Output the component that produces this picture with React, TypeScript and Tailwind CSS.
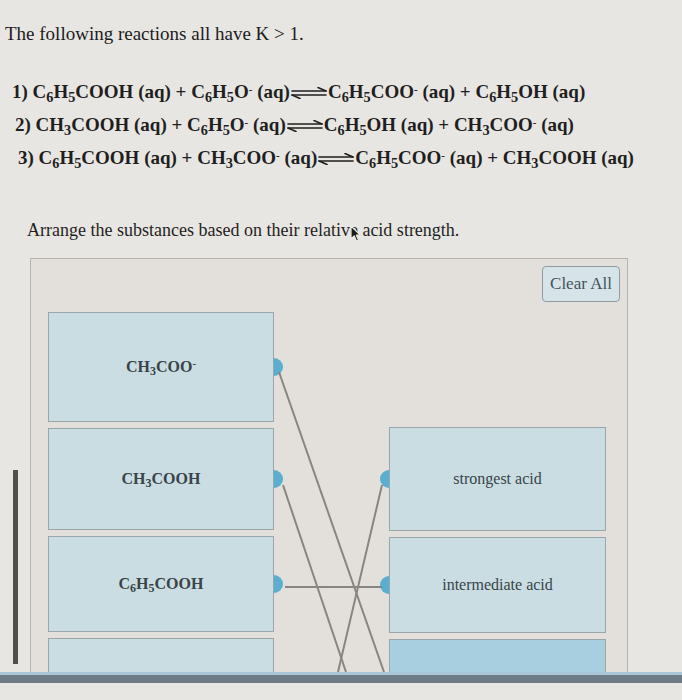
import React from 'react';

// Equilibrium harpoons drawn between reactants and products
function Equilibrium() {
    return (
        <svg width="36" height="12" viewBox="0 0 36 12" className="inline-block align-middle mx-[1px]">
            <g stroke="#1f1f1f" strokeWidth="1.6" fill="none" strokeLinecap="round">
                <line x1="1" y1="4" x2="35" y2="4" />
                <line x1="35" y1="4" x2="27" y2="0.5" />
                <line x1="1" y1="8" x2="35" y2="8" />
                <line x1="1" y1="8" x2="9" y2="11.5" />
            </g>
        </svg>
    );
}

const Ph = () => <>C<sub>6</sub>H<sub>5</sub></>;
const Me = () => <>CH<sub>3</sub></>;
const Minus = () => <sup className="text-[11px]">-</sup>;

const reactions = [
    {
        pad: 'pl-[12px]',
        left: <>1) <Ph />COOH (aq) + <Ph />O<Minus /> (aq)</>,
        right: <><Ph />COO<Minus /> (aq) + <Ph />OH (aq)</>,
    },
    {
        pad: 'pl-[15px]',
        left: <>2) <Me />COOH (aq) + <Ph />O<Minus /> (aq)</>,
        right: <><Ph />OH (aq) + <Me />COO<Minus /> (aq)</>,
    },
    {
        pad: 'pl-[18px]',
        left: <>3) <Ph />COOH (aq) + <Me />COO<Minus /> (aq)</>,
        right: <><Ph />COO<Minus /> (aq) + <Me />COOH (aq)</>,
    },
];

function Dot({ side }: { side: 'left' | 'right' }) {
    return side === 'right' ? (
        <div className="absolute top-1/2 -translate-y-1/2 right-[-10px] w-[9px] h-[18px] rounded-r-full bg-[#5aaed0]" />
    ) : (
        <div className="absolute top-1/2 -translate-y-1/2 left-[-10px] w-[9px] h-[18px] rounded-l-full bg-[#5aaed0]" />
    );
}

function Card({ h, children, dot, bold, tone = 'bg-[#c9dde3]' }: { h: string; children?: React.ReactNode; dot?: 'left' | 'right'; bold?: boolean; tone?: string }) {
    return (
        <div className={`relative ${h} ${tone} border border-[#9aa6a9] flex items-center justify-center text-[16px] text-[#3a4448] ${bold ? 'font-bold' : ''}`}>
            {children}
            {dot && <Dot side={dot} />}
        </div>
    );
}

export default function App() {
    return (
        <div className="w-[682px] h-[700px] bg-[#e8e6e2] overflow-hidden relative" style={{ fontFamily: '"Liberation Serif", "Times New Roman", serif' }}>
            <div className="h-[672px] overflow-hidden flex flex-col">
                <p className="pt-[22px] pl-[5px] text-[19px] text-[#1c1c1c] leading-[24px]">
                    The following reactions all have K &gt; 1.
                </p>

                <div className="mt-[30px] flex flex-col">
                    {reactions.map((r, i) => (
                        <div key={i} className={`${r.pad} h-[33px] flex items-center text-[19px] font-bold text-[#1f1f1f] whitespace-nowrap`}>
                            <span>{r.left}</span>
                            <Equilibrium />
                            <span>{r.right}</span>
                        </div>
                    ))}
                </div>

                <p className="mt-[44px] pl-[27px] text-[18px] text-[#1f1f1f] leading-[22px]">
                    Arrange the substances based on their relativ
                    <span className="relative">
                        e
                        {/* mouse pointer */}
                        <svg width="12" height="17" viewBox="0 0 12 17" className="absolute left-[0px] top-[5px]">
                            <path d="M1 1 L1 14 L4.2 11 L6.5 16 L8.5 15 L6.3 10.2 L10.5 10.2 Z" fill="#1a1a1a" stroke="#ecebe8" strokeWidth="1.2" strokeLinejoin="round" />
                        </svg>
                    </span>
                    {' '}acid strength.
                </p>

                <div className="mt-[17px] ml-[30px] w-[598px] h-[440px] shrink-0 border border-[#b4b4b2] bg-[#e3e0db] relative">
                    <div className="flex justify-end pr-[7px] pt-[7px]">
                        <button className="w-[78px] h-[36px] rounded-[4px] border border-[#8e9ca1] bg-[#d6e4e9] text-[17px] text-[#44535a]">
                            Clear All
                        </button>
                    </div>

                    <div className="flex items-start mt-[10px]">
                        <div className="ml-[17px] w-[226px] flex flex-col gap-[6px]">
                            <Card h="h-[110px]" dot="right" bold>
                                <span><Me />COO<Minus /></span>
                            </Card>
                            <Card h="h-[102px]" dot="right" bold>
                                <span><Me />COOH</span>
                            </Card>
                            <Card h="h-[96px]" dot="right" bold>
                                <span><Ph />COOH</span>
                            </Card>
                            <Card h="h-[80px]" />
                        </div>

                        <div className="ml-[115px] mt-[115px] w-[217px] flex flex-col gap-[6px]">
                            <Card h="h-[104px]" dot="left">strongest acid</Card>
                            <Card h="h-[96px]" dot="left">intermediate acid</Card>
                            <Card h="h-[80px]" tone="bg-[#a7cfe0]" />
                        </div>
                    </div>

                    {/* connections between substances and ranks */}
                    <svg className="absolute inset-0 pointer-events-none" width="596" height="438">
                        <g stroke="#878682" strokeWidth="2" fill="none">
                            <line x1="248" y1="113" x2="353" y2="413" />
                            <line x1="252" y1="226" x2="315" y2="413" />
                            <line x1="351" y1="226" x2="307" y2="413" />
                            <line x1="254" y1="328" x2="351" y2="328" />
                        </g>
                    </svg>
                </div>
            </div>

            <div className="h-[3px] bg-[#a9c6d8]" />
            <div className="h-[8px] bg-[#6d7b86]" />

            {/* dark screen edge on the left */}
            <div className="absolute left-[13px] top-[470px] w-[5px] h-[194px] bg-[#4f4f50]" />
        </div>
    );
}
